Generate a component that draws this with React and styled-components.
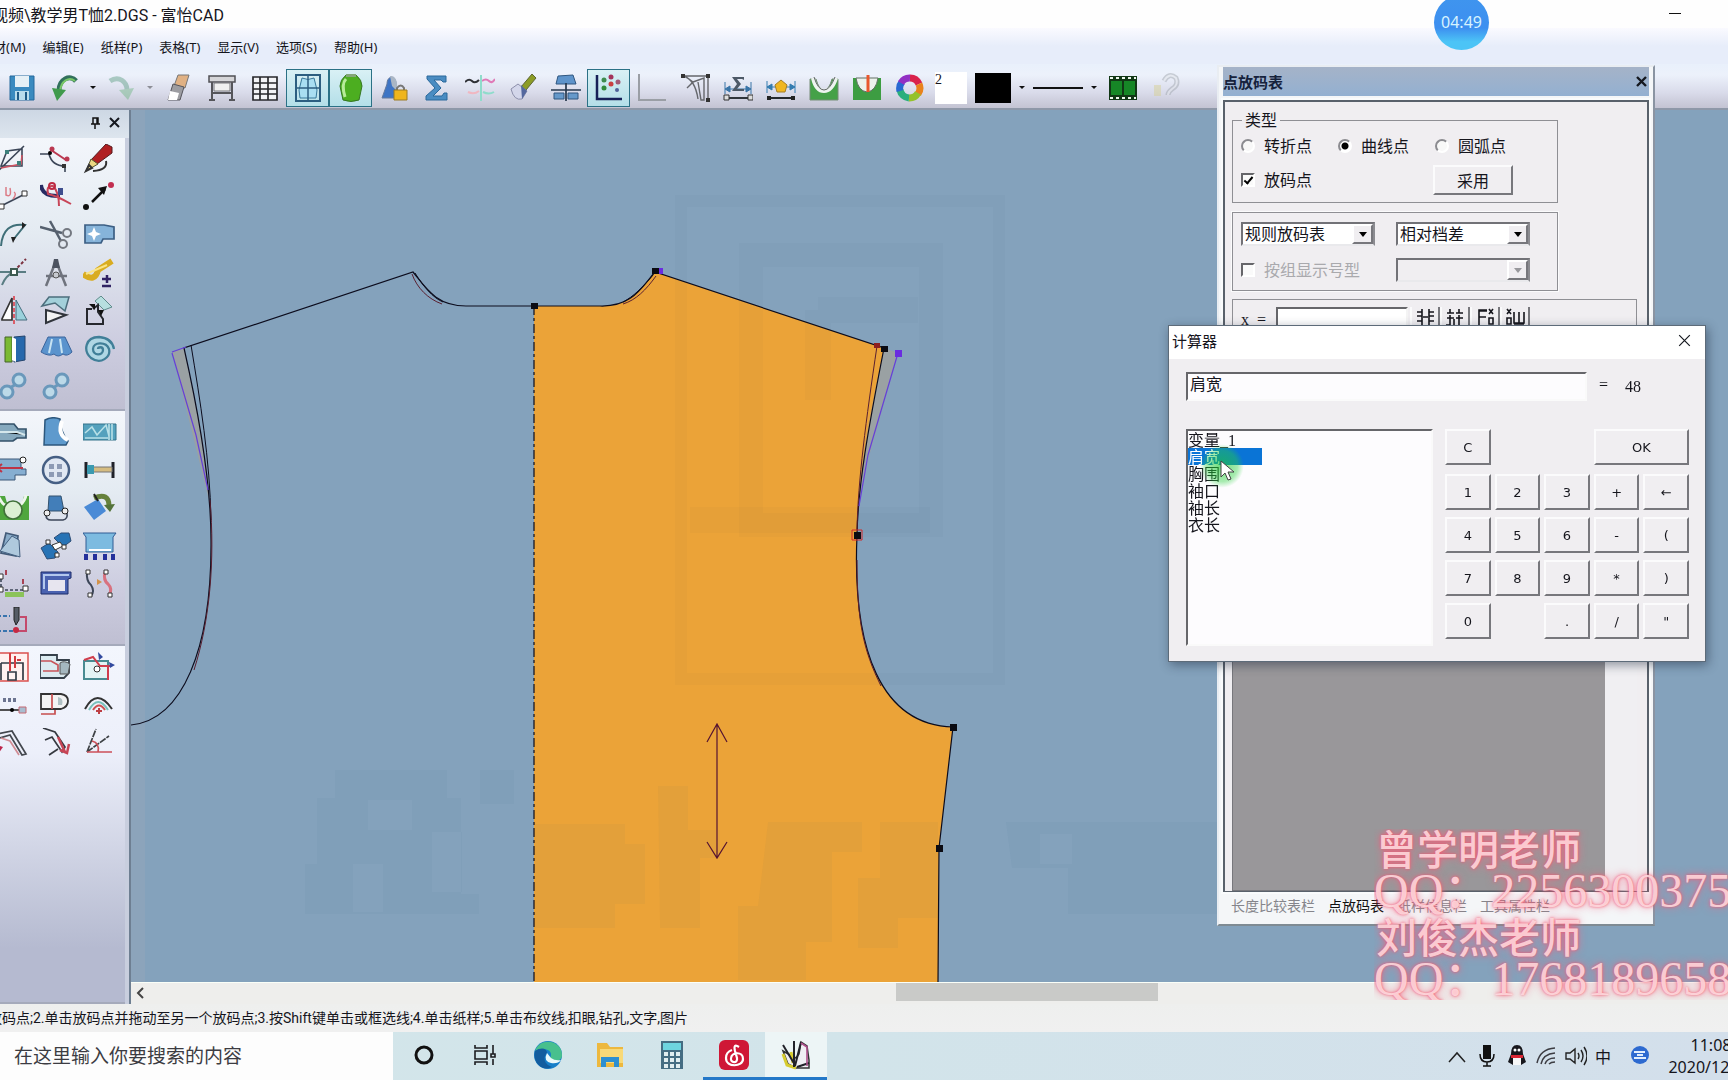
import styled, { createGlobalStyle } from "styled-components";
import { useState } from "react";

const GlobalStyle = createGlobalStyle`
  *,
  *::before,
  *::after {
    box-sizing: border-box;
  }

  body {
    margin: 0;
    overflow: hidden;
    font-family: "Noto Sans", "Noto Sans CJK SC", sans-serif;
    color: #15151c;
  }

  button,
  input,
  select {
    font-family: inherit;
    color: inherit;
    margin: 0;
  }
`;

const Desktop = styled.div`
  position: relative;
  display: flex;
  flex-direction: column;
  height: 100vh;
  overflow: hidden;
  background: #eeefee;
`;

const TitleBar = styled.header`
  display: flex;
  align-items: center;
  justify-content: space-between;
  height: 28px;
  flex: none;
  background: #fefefe;
  white-space: nowrap;
`;

const Title = styled.span`
  margin-left: -8px;
  font-family: Roboto, "Noto Sans CJK SC", sans-serif;
  font-size: 16px;
`;

const Minimize = styled.button`
  width: 12px;
  height: 14px;
  margin-right: 47px;
  padding: 0;
  border: 0;
  border-bottom: 1px solid #111;
  background: none;
  align-self: flex-start;
`;

const MenuBar = styled.nav`
  display: flex;
  align-items: center;
  gap: 17px;
  height: 36px;
  flex: none;
  padding-left: 1px;
  margin-left: -8px;
  background: linear-gradient(#fafaff, #e7edfa 50%);
`;

const MenuItem = styled.button`
  padding: 0;
  border: 0;
  background: none;
  font-size: 13px;
  white-space: nowrap;
`;

const Toolbar = styled.div`
  display: flex;
  align-items: center;
  height: 46px;
  flex: none;
  padding-top: 3px;
  border-bottom: 2px solid #8e98a8;
  background: linear-gradient(#e9f0fb, #ecf1fb 25%, #d9dbea 65%, #c3c3d2);
`;

const ToolButton = styled.button`
  display: flex;
  align-items: center;
  justify-content: center;
  width: 43px;
  height: 38px;
  flex: none;
  padding: 0;
  border: 1px solid ${(p) => (p.$active ? "#2b7186" : "transparent")};
  background: ${(p) => (p.$active ? "linear-gradient(#d9f1f5, #b4dfe8)" : "none")};
  opacity: ${(p) => (p.$faded ? 0.45 : 1)};
`;

const Caret = styled.button`
  width: 14px;
  flex: none;
  padding: 0;
  border: 0;
  background: none;
  opacity: ${(p) => (p.$faded ? 0.4 : 1)};

  &::after {
    content: "";
    display: block;
    margin: 0 auto;
    width: 6px;
    border: 3px solid transparent;
    border-top-color: #111;
    border-bottom: 0;
  }
`;

const SizeBox = styled.label`
  width: 32px;
  height: 32px;
  margin-left: 4px;
  background: #fff;

  input {
    width: 100%;
    padding: 0;
    border: 0;
    background: none;
    font: 14px "Liberation Serif", serif;
    vertical-align: top;
  }
`;

const ColorSwatch = styled.button`
  width: 36px;
  height: 30px;
  margin: 0 4px 0 8px;
  border: 0;
  background: #000;
`;

const LineStyle = styled.button`
  width: 50px;
  height: 2px;
  margin: 0 4px 0 4px;
  padding: 0;
  border: 0;
  background: #111;
`;

const Workspace = styled.main`
  display: flex;
  flex: 1;
  min-height: 0;
`;

const ToolPanel = styled.aside`
  display: flex;
  flex-direction: column;
  width: 131px;
  flex: none;
  overflow: hidden;
  border-right: 2px solid #6e7f92;
  background: #c8cede;
`;

const PanelHead = styled.div`
  display: flex;
  justify-content: flex-end;
  align-items: center;
  gap: 8px;
  height: 28px;
  padding: 0 9px 3px;
  background: linear-gradient(#cdd7e4, #dde5ee);
`;

const IconButton = styled.button`
  display: flex;
  padding: 0;
  border: 0;
  background: none;
`;

const ToolGroup = styled.div`
  display: grid;
  grid-template-columns: repeat(3, 43px);
  grid-auto-rows: 38px;
  align-content: start;
  justify-items: center;
  align-items: center;
  flex: ${(p) => (p.$grow ? 1 : "none")};
  margin-right: 4px;
  padding: 2px 0 3px;
  border-bottom: 2px solid #a5aabb;
  background: ${(p) =>
    p.$grow
      ? "linear-gradient(#f3f6fd, #eceffa 30%, #b5bad0 85%)"
      : "linear-gradient(#f3f6fb, #e4ebf2 35%, #cdcde0 75%, #bfbfd2)"};

  > * {
    margin-left: -16px;
  }
`;

const CanvasColumn = styled.section`
  display: flex;
  flex-direction: column;
  flex: 1;
  min-width: 0;
`;

const Canvas = styled.svg`
  display: block;
  width: 100%;
  flex: 1;
  min-height: 0;
  background: #84a2bc;
`;

const Scrollbar = styled.div`
  display: grid;
  grid-template-columns: 47.9% 16.4% 1fr;
  height: 22px;
  flex: none;
  border-top: 1px solid #fafff8;
  background: #eeeeec;
`;

const ScrollThumb = styled.div`
  height: 18px;
  background: #c9cac8;
`;

const StatusBar = styled.footer`
  height: 28px;
  flex: none;
  margin-left: -12px;
  background: linear-gradient(#eeefee, #f0f0f0);
  font-family: Roboto, "Noto Sans CJK SC", sans-serif;
  font-size: 14px;
  line-height: 29px;
  white-space: nowrap;
`;

const Taskbar = styled.div`
  display: flex;
  align-items: stretch;
  height: 48px;
  flex: none;
  background: linear-gradient(90deg, #d3e6ea, #d2e4ea 50%, #d3dfeb);
`;

const Search = styled.input`
  width: 393px;
  padding: 0 14px;
  border: 0;
  background: #fdfdfd;
  font-size: 19px;

  &::placeholder {
    color: #3c3c42;
    opacity: 1;
  }
`;

const TaskButton = styled.button`
  display: flex;
  align-items: center;
  justify-content: center;
  width: 62px;
  padding: 0;
  border: 0;
  border-bottom: 3px solid ${(p) => (p.$open ? "#2478c8" : "transparent")};
  background: ${(p) => (p.$active ? "#edf5f6" : "none")};
`;

const Tray = styled.div`
  display: flex;
  align-items: center;
  gap: 8px;
  margin-left: auto;
  white-space: nowrap;
`;

const Clock = styled.div`
  width: 67px;
  font-size: 16px;
  line-height: 22px;

  div {
    width: 100px;
    text-align: center;
  }
`;

const GradingPanel = styled.section`
  position: absolute;
  top: 65px;
  right: 73px;
  bottom: 154px;
  width: 438px;
  display: flex;
  flex-direction: column;
  padding: 0 4px 2px;
  border: 2px solid #e9edf2;
  border-right-color: #8a94a2;
  border-bottom-color: #7f8b93;
  background: #f4f6f8;
  font-size: 16px;
`;

const GradingTitle = styled.div`
  display: flex;
  align-items: center;
  justify-content: space-between;
  height: 29px;
  flex: none;
  padding: 0 2px 0 0;
  background: linear-gradient(#a5b3c8, #93b0d1);
  font-size: 15px;
  line-height: 20px;
  font-weight: 600;
  color: #16223c;
`;

const GradingBody = styled.div`
  display: flex;
  flex-direction: column;
  flex: 1;
  min-height: 0;
  margin-top: 4px;
  padding: 9px 10px 0 7px;
  border: 2px solid #59616b;
  border-bottom-width: 1px;
  outline: 2px solid #f9fbfc;
  background: #f0eef1;
`;

const Group = styled.fieldset`
  width: 326px;
  flex: none;
  min-width: 0;
  margin: ${(p) => (p.$plain ? "9px 0 0" : 0)};
  padding: ${(p) => (p.$plain ? "9px 8px 8px" : "0 8px 7px")};
  border: 1px solid #8f8f94;
  outline: ${(p) => (p.$plain ? "1px solid #fbfbfc" : 0)};

  legend {
    margin-left: 1px;
    padding: 0 3px;
    line-height: 18px;
  }
`;

const Row = styled.div`
  display: flex;
  align-items: center;
  gap: ${(p) => p.$gap || 0}px;
  margin-top: ${(p) => p.$top || 0}px;
`;

const Choice = styled.label`
  display: flex;
  align-items: center;
  gap: 9px;
  width: ${(p) => p.$width || 97}px;
  line-height: 24px;
  white-space: nowrap;
  color: ${(p) => (p.$disabled ? "#a9a9ad" : "inherit")};
`;

const Radio = styled.input.attrs({ type: "radio" })`
  appearance: none;
  width: 14px;
  height: 14px;
  flex: none;
  border: 2px solid;
  border-color: #8b8b90 #fff #fff #8b8b90;
  border-radius: 50%;
  background: ${(p) => (p.checked ? "radial-gradient(#000 3px, #fff 4px)" : "#f8f8f8")};
`;

const Check = styled.input.attrs({ type: "checkbox" })`
  appearance: none;
  width: 14px;
  height: 14px;
  flex: none;
  border: 2px solid;
  border-color: #66666a #fff #fff #66666a;
  background: #fafafa;

  &:checked::after {
    content: "";
    display: block;
    width: 5px;
    height: 9px;
    margin: 0 auto;
    border: solid #000;
    border-width: 0 2px 2px 0;
    transform: rotate(40deg);
  }
`;

const RaisedButton = styled.button`
  width: ${(p) => (p.$width ? p.$width + "px" : "auto")};
  height: ${(p) => p.$height || 36}px;
  padding: 0;
  border: 2px solid;
  border-color: #fbfbfc #77777c #77777c #fbfbfc;
  background: #f0eef1;
  font-size: ${(p) => p.$size || 14}px;
`;

const Drop = styled.span`
  position: relative;
  display: block;
  width: 134px;
  height: 24px;
  border: 2px solid;
  border-color: #727277 #8b8b90 #e9e9ec #727277;
  background: ${(p) => (p.$disabled ? "#f0eef1" : "#fff")};

  select {
    appearance: none;
    display: block;
    width: 100%;
    height: 20px;
    padding: 0 0 0 2px;
    border: 0;
    border-radius: 0;
    background: none;
    font-size: 16px;
    line-height: 20px;
  }

  &::before {
    content: "";
    position: absolute;
    top: 0;
    right: 0;
    width: 21px;
    height: 20px;
    border: 2px solid;
    border-color: #fff #77777c #77777c #fff;
    background: #f0eef1;
    pointer-events: none;
  }

  &::after {
    content: "";
    position: absolute;
    top: 8px;
    right: 6px;
    border: 4px solid transparent;
    border-top: 5px solid ${(p) => (p.$disabled ? "#98989c" : "#000")};
    border-bottom: 0;
    pointer-events: none;
  }
`;

const Offsets = styled.div`
  display: flex;
  align-items: center;
  flex: none;
  height: 34px;
  margin-top: 8px;
  padding: 6px 8px 0;
  border: 1px solid #8f8f94;
  border-bottom: 0;
  font-family: "Liberation Serif", serif;

  input {
    width: 132px;
    height: 26px;
    margin: 0 2px 0 10px;
    border: 2px solid;
    border-color: #66666a #f4f4f4 #f4f4f4 #66666a;
    background: #fff;
  }

  button {
    border-top: 0;
  }
`;

const GradeList = styled.div`
  flex: 1;
  border: 1px solid #77777c;
  border-right: 32px solid #f0eff2;
  background: #99979a;
`;

const TabRow = styled.div`
  display: flex;
  gap: 13px;
  height: 30px;
  flex: none;
  align-items: center;
  padding: 0 0 2px 8px;
`;

const Tab = styled.button`
  padding: 0;
  border: 0;
  background: none;
  font-size: 14px;
  line-height: 20px;
  white-space: nowrap;
  color: ${(p) => (p.$active ? "#111" : "#85858b")};
`;

const Dialog = styled.section`
  position: absolute;
  top: 325px;
  right: 22px;
  width: 538px;
  border: 1px solid #5d6b79;
  background: #f0eef1;
  box-shadow: 2px 3px 10px rgba(20, 30, 50, 0.45);
`;

const DialogTitle = styled.div`
  display: flex;
  align-items: center;
  justify-content: space-between;
  height: 33px;
  padding: 0 14px 4px 3px;
  background: #fff;
  font-size: 15px;
`;

const DialogBody = styled.div`
  padding: 13px 16px 15px 17px;
`;

const Expression = styled.div`
  display: flex;
  align-items: center;
  font-family: "Liberation Serif", "Noto Sans CJK SC", serif;
  font-size: 16px;

  input {
    width: 401px;
    height: 29px;
    padding: 0 2px 8px;
    border: 2px solid;
    border-color: #66666a #fafafa #fafafa #66666a;
    background: #fdfcfe;
    font-size: 16px;
    outline: none;
  }

  span {
    margin-left: 12px;
    padding-bottom: 4px;
  }

  output {
    margin-left: 17px;
  }
`;

const Keys = styled.div`
  display: flex;
  gap: 12px;
  margin-top: 28px;
`;

const VariableList = styled.select`
  width: 247px;
  height: 217px;
  padding: 0;
  border: 2px solid;
  border-color: #66666a #fafafa #fafafa #66666a;
  border-radius: 0;
  background: #fdfcfe;
  font-family: "Liberation Serif", "Noto Sans CJK SC", serif;
  font-size: 16px;
  overflow: hidden;
  outline: none;

  option {
    display: flex;
    align-items: center;
    width: 74px;
    height: 17px;
    min-height: 0;
    padding: 0 0 2px;
    white-space: pre;
    overflow: visible;
  }

  option:checked {
    background: linear-gradient(#0a74d6, #0a74d6);
    color: #fff;
  }
`;

const Keypad = styled.div`
  display: grid;
  grid-template-columns: repeat(5, 1fr);
  grid-template-rows: 38px;
  grid-auto-rows: 36px;
  gap: 7px 4px;
  flex: 1;
`;

const Key = styled(RaisedButton)`
  grid-column: ${(p) => p.$column || "auto"};
  height: 36px;
  font-family: "DejaVu Sans", sans-serif;
  font-size: 13px;
`;

const Pointer = styled.div`
  position: absolute;
  top: 444px;
  right: 484px;
  width: 44px;
  height: 44px;
  border-radius: 50%;
  background: radial-gradient(rgba(30, 200, 50, 0.65), rgba(40, 210, 60, 0.4) 50%, transparent 70%);
  pointer-events: none;

  svg {
    display: block;
    margin: 16px 0 0 20px;
  }
`;

const Timer = styled.div`
  position: absolute;
  top: -5px;
  right: 239px;
  width: 55px;
  height: 55px;
  border-radius: 50%;
  background: linear-gradient(#3f95ee, #3d8ff0 60%, #4cc4f6 85%);
  color: #d6f3ff;
  font-size: 16px;
  line-height: 54px;
  text-align: center;
`;

const Watermark = styled.div`
  position: absolute;
  right: 0;
  bottom: 80px;
  width: 354px;
  height: 171px;
  overflow: hidden;
  color: rgba(255, 222, 226, 0.85);
  text-shadow: 0 0 3px #f0596f, 0 0 8px rgba(245, 100, 130, 0.9);
  white-space: nowrap;
  pointer-events: none;

  p {
    margin: 0;
    padding-left: 2px;
    font: 500 41px/36px "Noto Sans CJK SC", sans-serif;
  }

  p:nth-child(even) {
    padding-left: 0;
    font: 48px/52px "Liberation Serif", "Noto Sans CJK SC", serif;
  }
`;

const line = { fill: "none", stroke: "#3c4658", strokeWidth: 1.6 };

const icons = {
  save: (
    <>
      <path d="M3 3h24v24H3z" fill="#3a8abf" stroke="#24689c" />
      <path d="M8 3h14v11H8z" fill="#e6f0f6" />
      <path d="M8 18h14v9H8z" fill="#b9dcec" />
      <path d="M11 19v8M19 19v8" stroke="#1e5a86" strokeWidth="2" />
    </>
  ),
  undo: (
    <>
      <path d="M26 8C20 1 9 6 9 18" fill="none" stroke="#31705b" strokeWidth="5" />
      <path d="M25 8C19 3 11 8 10 18" fill="none" stroke="#79c767" strokeWidth="2" />
      <path d="M2 15l14 2-9 11z" fill="#409a4c" />
    </>
  ),
  redo: (
    <>
      <path d="M3 8c9-6 17 1 17 9" fill="none" stroke="#5c9d82" strokeWidth="5" />
      <path d="M12 17l15-2-6 12z" fill="#6fb583" />
    </>
  ),
  eraser: (
    <>
      <path d="M14 2l11 0-4 13-11-2z" fill="#e0b184" stroke="#777" />
      <path d="M9 11l11 3-4 13H4z" fill="#9d9da2" stroke="#55555c" />
      <path d="M6 18l9 2-2 7H4z" fill="#fff" />
    </>
  ),
  plotter: (
    <>
      <path d="M2 3h26v6H2z" fill="#d5d5d8" stroke="#505055" strokeWidth="1.5" />
      <path d="M5 9v17M25 9v17M2 27h6M22 27h6M5 20h20" fill="none" stroke="#55555a" strokeWidth="2" />
      <path d="M7 10h16v8H7z" fill="#f0f0f0" stroke="#77777a" />
    </>
  ),
  grid: (
    <path
      d="M3 4h24v23H3zM3 10h24M3 16h24M3 21h24M10 4v23M18 4v23"
      fill="#f3f3f6"
      stroke="#28282c"
      strokeWidth="1.7"
    />
  ),
  piece: (
    <>
      <path d="M3 2h24v26H3z" fill="none" stroke="#2c5e80" strokeWidth="2" />
      <path d="M9 5q6 3 12 0l3 12-1 8H7l-1-8z" fill="#a9def2" stroke="#37789a" />
      <path d="M15 2v26M3 15h24" stroke="#2c5e80" strokeWidth="1.5" />
    </>
  ),
  jar: (
    <>
      <path d="M10 2h10q6 5 6 11l-3 14q-8 3-16 0L4 13q0-6 6-11z" fill="#4cae20" stroke="#367722" />
      <path d="M10 6q-5 5-1 18" fill="none" stroke="#b8eb9a" strokeWidth="3" />
      <path d="M10 1h10v3H10z" fill="#83a778" />
    </>
  ),
  lock: (
    <>
      <path d="M8 11c0-9 9-9 9 0l1 14H3z" fill="#3e74c4" stroke="#64799c" />
      <path d="M11 3q6-1 7 8l1 8-6-6z" fill="#aab6c5" />
      <path d="M18 18v-3q4-5 7 0v3" fill="none" stroke="#777" strokeWidth="2" />
      <path d="M15 17h13v10H15z" fill="#efb51d" stroke="#9b7a24" />
    </>
  ),
  sigma: <path d="M5 3h19v6h-3l-2-2h-7l7 8-8 8h9l2-3h3v7H4v-4l9-8-8-9z" fill="#4a8cc2" stroke="#2a689b" />,
  curves: (
    <>
      <path d="M0 9q4-4 7-1t7-1" fill="none" stroke="#2f3136" strokeWidth="2" />
      <path d="M17 8q4-3 7 0t6-2" fill="none" stroke="#e07ab7" strokeWidth="2" />
      <path d="M3 19q6 3 11-1" fill="none" stroke="#f0b7c1" strokeWidth="2" />
      <path d="M16 2v26M18 19q6 3 11 0" fill="none" stroke="#8fdccb" strokeWidth="2" />
    </>
  ),
  brush: (
    <>
      <path d="M24 1l4 4-10 12-5-3z" fill="#8c9c26" stroke="#5c6634" />
      <path d="M3 16l7-5 9 7-5 8q-8 2-11-10z" fill="#d3d6ea" stroke="#8c8fab" />
      <path d="M13 12l6 6-5 8z" fill="#54689e" />
    </>
  ),
  sleeve: (
    <>
      <path d="M7 3l15-1 3 9H5z" fill="#5e94cb" stroke="#305780" />
      <path d="M0 17h30M15 10v18" stroke="#26384d" strokeWidth="1.7" />
      <path d="M3 20h10v6H3zM17 20h10v6H17z" fill="#6699ca" stroke="#305780" />
    </>
  ),
  scatter: (
    <>
      <path d="M3 2v24h25" fill="none" stroke="#172058" strokeWidth="2.5" />
      <circle cx="10" cy="7" r="2.5" fill="#3e8c4e" /><circle cx="17" cy="4" r="2.5" fill="#a3345b" />
      <circle cx="10" cy="15" r="2.5" fill="#318b3b" /><circle cx="17" cy="11" r="2.5" fill="#c94040" />
      <circle cx="24" cy="9" r="2.5" fill="#a25a75" /><circle cx="23" cy="17" r="2" fill="#51639a" />
    </>
  ),
  axes: <path d="M2 1v26h27" fill="none" stroke="#9a9ea5" strokeWidth="2" />,
  corner: (
    <>
      <path d="M3 3h25v24M3 3q12 3 15 23M5 3l8 6-6 6M13 9l11-4v22h-3L18 9" fill="none" stroke="#65676c" strokeWidth="1.4" />
      <path d="M1 1h4v4H1zM26 1h4v4h-4zM26 25h4v4h-4z" fill="#333" />
    </>
  ),
  measure: (
    <>
      <path d="M2 9v12M28 9v12M2 16l5-3v6zM28 16l-5-3v6zM7 16h16" fill="#3974a7" stroke="#3974a7" />
      <path d="M9 4h12v3l-2-1h-5l4 5-4 5h7v2H9l5-7z" fill="#4d5967" />
      <path d="M4 25h23" stroke="#30343a" strokeWidth="2" />
      <path d="M1 22h5v5H1zM25 22h5v5h-5z" fill="#ddd" stroke="#333" />
    </>
  ),
  star: (
    <>
      <path d="M1 8v12M29 8v12M1 14h28M1 14l5-3v6zM29 14l-5-3v6z" fill="#347cb0" stroke="#347cb0" />
      <path d="M15 7l6 5-2 7h-8l-2-7z" fill="#f0b620" stroke="#a57e24" />
      <path d="M3 25h24" stroke="#25292e" strokeWidth="2" />
      <path d="M1 23h4v4H1zM25 23h4v4h-4z" fill="#222" />
    </>
  ),
  notch: (
    <>
      <path d="M1 6h6q3 11 8 11t8-11h6v21H1z" fill="#45a148" stroke="#758d77" />
      <path d="M4 5q3 13 11 13T27 5" fill="none" stroke="#eef4f0" strokeWidth="4" />
      <path d="M5 4q4 13 10 13T26 4" fill="none" stroke="#5f6464" />
    </>
  ),
  notchRed: (
    <>
      <path d="M1 5h28v22H1z" fill="#3d9d42" />
      <path d="M4 5q2 13 11 14 9-1 11-14z" fill="#edf2ed" stroke="#627064" />
      <path d="M16 2v17" stroke="#e9572d" strokeWidth="3" />
    </>
  ),
  ring: (
    <g fill="none" strokeWidth="7">
      <path d="M15 5a10 10 0 0 1 9 6" stroke="#d9224b" />
      <path d="M24 11a10 10 0 0 1-1 10" stroke="#e9821c" />
      <path d="M23 20a10 10 0 0 1-9 5" stroke="#94c22b" />
      <path d="M14 25a10 10 0 0 1-9-8" stroke="#2baf7c" />
      <path d="M5 18a10 10 0 0 1 2-9" stroke="#2869d2" />
      <path d="M6 10a10 10 0 0 1 9-5" stroke="#9230c4" />
    </g>
  ),
  film: (
    <>
      <path d="M1 3h28v24H1z" fill="#123816" />
      <path d="M3 8h11v14H3zM16 8h11v14H16z" fill="#168726" />
      <path d="M2 5h26M2 25h26" stroke="#eef8ee" strokeWidth="2" strokeDasharray="3 3" />
    </>
  ),
  help: (
    <>
      <path d="M13 8q5-9 12-3 3 7-4 11-4 3-4 6" fill="none" stroke="#9ba1a8" strokeWidth="5" />
      <path d="M13 8q5-9 12-3 3 7-4 11-4 3-4 6" fill="none" stroke="#dfe2e6" strokeWidth="2" />
      <path d="M3 12h7v11H3z" fill="#d6cf8e" />
    </>
  ),
  pen1: (
    <>
      <path d="M2 26L27 2M4 22l6-15 15-2v17z" {...line} />
      <path d="M4 24l20-4 1-9" fill="none" stroke="#cf5362" strokeWidth="1.5" />
      <path d="M8 6h4v4H8zM20 17h4v4h-4z" fill="#3c807b" />
    </>
  ),
  curvePoint: (
    <>
      <path d="M0 10h9q3 12 16 12v6" {...line} />
      <path d="M11 6l15 10" stroke="#ba3850" strokeWidth="2" />
      <circle cx="10" cy="9" r="2" /><circle cx="12" cy="5" r="2.5" fill="#ba3850" />
      <circle cx="27" cy="15" r="2.5" fill="#ba3850" /><path d="M22 20h4v4h-4z" fill="#333" />
    </>
  ),
  pencil: (
    <>
      <path d="M23 0l6 3v6L14 20 8 16z" fill="#b01f22" stroke="#541d20" />
      <path d="M8 15l7 5L3 27z" fill="#ecd782" stroke="#553" />
      <path d="M3 27l3-6 3 3zM10 27q15-1 13-10" fill="none" stroke="#333" strokeWidth="2" />
    </>
  ),
  joint: (
    <>
      <path d="M4 24l24-12" {...line} />
      <path d="M9 5v8q6 3 4-7M16 17q4-5 1-7" fill="none" stroke="#dc7c87" strokeWidth="1.5" />
      <path d="M2 22h5v5H2zM25 9h5v5h-5z" fill="#fff" stroke="#333" />
    </>
  ),
  pinCurve: (
    <>
      <path d="M1 3q1 12 19 11" fill="none" stroke="#272b63" strokeWidth="4" />
      <path d="M31 22Q17 14 8 12q-2-9 5-8 6 6 6 20" fill="none" stroke="#c84558" strokeWidth="2" />
      <circle cx="12" cy="4" r="3" fill="none" stroke="#bd2a43" strokeWidth="2" /><path d="M18 6h5v7h-5z" fill="#3e4e8e" />
    </>
  ),
  arrowLine: (
    <>
      <path d="M9 20L22 7" stroke="#111" strokeWidth="2.5" />
      <path d="M15 6l9-2-3 9z" fill="#111" /><circle cx="3" cy="25" r="3" fill="#111" />
      <circle cx="28" cy="3" r="3" fill="#c22f50" />
    </>
  ),
  arc: (
    <>
      <path d="M4 26Q6 2 28 5L16 20" fill="none" stroke="#3f6f78" strokeWidth="2" />
      <path d="M25 2l4 3-4 4zM14 17h5l-3 6z" fill="#222" />
    </>
  ),
  scissors: (
    <>
      <path d="M0 7l22 6M10 1l11 20" stroke="#55606e" strokeWidth="2.5" />
      <circle cx="27" cy="13" r="4" fill="none" stroke="#737880" strokeWidth="2" />
      <circle cx="23" cy="24" r="4" fill="none" stroke="#737880" strokeWidth="2" />
    </>
  ),
  pieceStar: (
    <>
      <path d="M2 5h19l10 2v12H20l-2 4H2z" fill="#86b4da" stroke="#3c5f84" strokeWidth="1.7" />
      <path d="M11 7l2 5 5 2-5 2-2 5-2-5-5-2 5-2z" fill="#fff" />
    </>
  ),
  cross: (
    <>
      <path d="M2 14h27M5 27q4-10 12-13" fill="none" stroke="#5a7d83" strokeWidth="2" />
      <path d="M17 13L29 1" stroke="#7c3340" strokeWidth="2" strokeDasharray="3 2" />
      <path d="M14 11h6v6h-6z" fill="#fff" stroke="#3d5b50" strokeWidth="2" />
    </>
  ),
  compass: (
    <>
      <path d="M16 3L6 28M16 3l10 25M6 18h21" stroke="#6f737d" strokeWidth="2.5" />
      <path d="M14 1h4l2 9h-8z" fill="#4c5360" /><circle cx="16" cy="17" r="3" fill="#c7cad0" stroke="#555" />
    </>
  ),
  tape: (
    <>
      <path d="M0 16q12 9 15-4L29 3" fill="none" stroke="#d9ac20" strokeWidth="6" />
      <path d="M3 16l21-9" stroke="#fae484" strokeWidth="2" />
      <path d="M19 21h9M24 17v8M19 28h9" stroke="#302363" strokeWidth="2.5" />
    </>
  ),
  mirror: (
    <>
      <path d="M5 24V23L15 2v22z" fill="#fff" stroke="#333" strokeWidth="1.7" />
      <path d="M19 4l11 20H19z" fill="#9ad1dc" stroke="#466d7e" />
      <path d="M17 0v28" stroke="#da5d69" strokeWidth="2" strokeDasharray="4 2" />
    </>
  ),
  fold: (
    <>
      <path d="M2 10L9 1h20l-4 14-10-8z" fill="#a3d0da" stroke="#4c6d7c" strokeWidth="1.5" />
      <path d="M6 14v13l20-8z" fill="#f2f2f2" stroke="#30343b" strokeWidth="2" />
    </>
  ),
  rotate: (
    <>
      <path d="M12 5l6-5 11 11-8 3z" fill="#b7dfdf" stroke="#5f8b8b" />
      <path d="M9 13H4v15h16v-5l-5-7V9l-5 4" fill="none" stroke="#26282e" strokeWidth="2" />
      <path d="M15 14h6l-3 6zM6 8h6v6z" fill="#111" />
    </>
  ),
  panels: (
    <>
      <path d="M8 3h7v25H8z" fill="#7bb934" stroke="#456528" />
      <path d="M17 3l11-1v24l-11 2z" fill="#2768ac" stroke="#25456e" />
      <path d="M15 3l4 2v23l-4-2z" fill="#fff" />
    </>
  ),
  skirt: (
    <>
      <path d="M8 3h17l7 15q-5 5-9 2-5 4-9 0-5 3-13-2z" fill="#5a93cd" stroke="#3a649c" />
      <path d="M12 5l-3 14M20 5l2 14" stroke="#c7e3f2" strokeWidth="2" />
    </>
  ),
  spiral: (
    <path
      d="M31 15q-2-11-15-12C2 3 0 17 8 24c10 7 20-1 18-9C23 7 10 8 10 15c0 7 10 7 10 1 0-4-5-3-5-1"
      fill="#afd7e4"
      stroke="#417f98"
      strokeWidth="2.3"
    />
  ),
  links: (
    <g fill="#bcd9e8" stroke="#6a98bb" strokeWidth="3">
      <circle cx="22" cy="8" r="6" /><circle cx="10" cy="20" r="6" />
      <path d="M13 16l6-4" />
    </g>
  ),
  pieceSide: (
    <>
      <path d="M0 7h17l4 5h8v9h-9l-4 3H0z" fill="#86a9be" stroke="#34526a" strokeWidth="1.7" />
      <path d="M0 15h20l8 3" stroke="#d4e7ec" strokeWidth="2" />
    </>
  ),
  seam: (
    <>
      <path d="M5 3q7-4 15-1 1 14 8 22l-2 4H4z" fill="#5e9acd" stroke="#2c577d" strokeWidth="1.5" />
      <path d="M22 4q-5 14 6 19" fill="none" stroke="#fff" strokeWidth="4" />
    </>
  ),
  texture: (
    <>
      <path d="M0 7h33v16H0z" fill="#54a1bd" stroke="#35728a" />
      <path d="M2 16l7-6 5 8 9-10 3 11M2 21h23M26 7v16M29 7v16" fill="none" stroke="#b8e0e7" strokeWidth="1.6" />
    </>
  ),
  redArrow: (
    <>
      <path d="M0 4h24v10h5v6h-11v5H0z" fill="#86aed1" stroke="#3d5879" />
      <path d="M0 13h26M5 9l-5 4 5 4" fill="none" stroke="#be3447" strokeWidth="2" />
      <circle cx="26" cy="5" r="3" fill="#fff" stroke="#222" />
    </>
  ),
  button: (
    <>
      <circle cx="16" cy="15" r="13" fill="#e0e8f3" stroke="#455f84" strokeWidth="2.5" />
      <path d="M9 9h5v5H9zM17 9h5v5h-5zM9 17h5v5H9zM17 17h5v5h-5z" fill="#8d9bb5" />
    </>
  ),
  bar: (
    <>
      <path d="M3 7v16M30 7v16" stroke="#202229" strokeWidth="3" />
      <path d="M5 12h24v5H5z" fill="#d5bc81" stroke="#777" /><path d="M4 10h7v9H4z" fill="#3b9ab0" />
    </>
  ),
  green: (
    <>
      <path d="M0 3h8q3 14 10 13 6 0 9-13h5v24H0z" fill="#4fa63e" />
      <path d="M1 3q5 9 7 9h15q5-4 6-10" fill="none" stroke="#eff6ed" strokeWidth="3" />
      <circle cx="16" cy="17" r="9" fill="#dcf0d3" stroke="#41713a" strokeWidth="1.7" />
    </>
  ),
  cuff: (
    <>
      <path d="M9 3h12l3 15H8z" fill="#427eb9" stroke="#34536f" />
      <path d="M6 22q0 5 5 5h12q5-1 4-7" {...line} />
      <circle cx="7" cy="20" r="3" fill="#eee" stroke="#222" /><circle cx="25" cy="18" r="3" fill="#eee" stroke="#222" />
    </>
  ),
  turn: (
    <>
      <path d="M1 14l14-8 8 12-12 9z" fill="#4a8ad6" /><path d="M11 5q15-6 15 8" fill="none" stroke="#66813c" strokeWidth="5" />
      <path d="M21 12l11-1-5 8z" fill="#54733a" /><path d="M11 1l4 7" stroke="#222" strokeWidth="2" />
    </>
  ),
  sheets: (
    <>
      <path d="M9 2l12 3-2 20-15-3z" fill="#8aacc9" stroke="#435b78" strokeWidth="1.7" />
      <path d="M15 5l7 4 1 17-20-6z" fill="#afc9dd" stroke="#446080" />
    </>
  ),
  blobs: (
    <>
      <path d="M1 17l8-5 9 9-3 6-8 1zM14 7l7-5h8l2 8-8 6z" fill="#2773b5" stroke="#2e4d76" />
      <path d="M12 14l8-3 3 4-8 4z" fill="#fff" stroke="#333" /><path d="M6 9h4v4H6zM22 14h4v4h-4zM15 22h4v4h-4z" fill="#fff" stroke="#333" />
    </>
  ),
  drape: (
    <>
      <path d="M0 2h33l-3 4v15H3V6z" fill="#7dbbe0" stroke="#315c94" />
      <path d="M6 19h22" stroke="#fff" fill="none" strokeWidth="2" />
      <path d="M3 23v6M12 23v6M22 23v6M30 23v6" stroke="#24309a" strokeWidth="4" />
    </>
  ),
  stitch: (
    <>
      <path d="M8 23h19v5H8z" fill="#8bc35a" /><path d="M4 5v16h25" {...line} strokeDasharray="3 2" />
      <path d="M1 5h5v5H1zM1 18h5v5H1zM26 17h5v5h-5z" fill="#fff" stroke="#333" /><path d="M9 1v5M26 10v5" stroke="#a74354" strokeWidth="2" />
    </>
  ),
  frame: (
    <>
      <path d="M1 3h30v6l-3 1v15H1z" fill="#4a62b0" stroke="#1c2c6b" />
      <path d="M8 11h17v11H8z" fill="#e7e5ef" /><path d="M3 6h26M4 6v14" fill="none" stroke="#b3c8ed" strokeWidth="2" />
    </>
  ),
  sCurve: (
    <>
      <path d="M4 3q-1 9 4 13 4 6 0 11" {...line} strokeWidth="2" />
      <path d="M22 3q-2 8 3 12 5 5 1 11" fill="none" stroke="#d8717f" strokeWidth="3" />
      <path d="M3 1h4v4H3zM5 24h4v4H5zM21 1h4v4h-4zM25 24h4v4h-4z" fill="#fff" stroke="#333" /><path d="M14 10l5 3-5 3z" fill="#d39249" />
    </>
  ),
  needle: (
    <>
      <path d="M0 9h13M0 24h17" stroke="#3874ae" strokeWidth="2" strokeDasharray="4 2" />
      <path d="M17 0v13l2 5 3-5V0z" fill="#555c65" stroke="#222" /><path d="M23 10h6v14h-9" fill="none" stroke="#c44a6c" strokeWidth="2" />
      <circle cx="19" cy="23" r="3" fill="#c52943" />
    </>
  ),
  house: (
    <>
      <path d="M0 1h31v28H0z" fill="#fff1f0" stroke="#da504e" strokeWidth="1.5" />
      <path d="M4 11h22v17M4 11v17M11 20h8v8h-8z" fill="none" stroke="#343b45" strokeWidth="1.7" />
      <path d="M13 1v18M18 4v12M20 8h4" stroke="#d23a3f" strokeWidth="2" />
    </>
  ),
  bag: (
    <>
      <path d="M0 3h17v5h12v13l-5 5H0z" fill="#dcebf1" stroke="#36404a" strokeWidth="1.8" />
      <path d="M1 9h10l7 4v6H3" fill="none" stroke="#c8555a" strokeWidth="1.7" /><path d="M20 11q4-3 10 1l-2 10h-8z" fill="#a5b7bf" stroke="#555" />
    </>
  ),
  cutBox: (
    <>
      <path d="M1 9h24v18H1z" fill="#e4f4f5" stroke="#488b91" strokeWidth="2" />
      <path d="M1 8l9-3 7 9h12M25 14v14" fill="none" stroke="#d03e4d" strokeWidth="2" /><path d="M15 0l5 5-4 3zM26 10l6 3-5 3z" fill="#324a9f" />
      <circle cx="14" cy="17" r="3" fill="#fff" stroke="#333" />
    </>
  ),
  dots: (
    <>
      <path d="M6 8h3v4H6zM11 8h3v4h-3zM16 8h3v4h-3z" fill="#6c7490" /><path d="M0 20h29" stroke="#333" strokeWidth="1.7" />
      <circle cx="15" cy="20" r="2" /><path d="M22 17h7v6h-7z" fill="#a8bdd0" stroke="#c56973" />
    </>
  ),
  layers: (
    <>
      <path d="M1 4h20q7 1 7 7t-7 8H1z" fill="#f3f3f3" stroke="#333" strokeWidth="1.8" />
      <path d="M12 4v15M1 24h14v-4" fill="none" stroke="#c64e4f" strokeWidth="1.7" /><path d="M18 7q6 1 4 8h-4V7z" fill="#b1c1c4" />
    </>
  ),
  rainbow: (
    <g fill="none" strokeWidth="2">
      <path d="M2 19q12-22 27 0" stroke="#333" /><path d="M6 20q9-16 19 0" stroke="#7bc1bc" />
      <path d="M10 20q6-9 12 0" stroke="#cc5151" /><path d="M13 21h6M16 18v6" stroke="#bd3e44" />
    </g>
  ),
  angleL: (
    <>
      <path d="M0 6l15-3 14 23-4 1L13 7 3 10" fill="none" stroke="#43474e" strokeWidth="1.7" />
      <path d="M4 10l9 3 9 14" fill="none" stroke="#d18c94" strokeWidth="1.7" /><path d="M0 17l6 2-5 7z" fill="#bd244b" />
    </>
  ),
  legs: (
    <>
      <path d="M3 0l12 4 10 15-3 5L12 9 5 12M9 27l9-6" fill="none" stroke="#353940" strokeWidth="1.7" />
      <path d="M18 9l7 15M29 16l-2 9-7-3" fill="none" stroke="#c64455" strokeWidth="2.5" />
    </>
  ),
  protractor: (
    <>
      <path d="M4 24L26 8M4 24L13 1" stroke="#3d4145" strokeWidth="1.7" strokeDasharray="7 1" />
      <path d="M4 24h25M9 13q8 2 6 11" fill="none" stroke="#cc5059" strokeWidth="1.6" />
    </>
  ),
};

const toolGroups = [
  [
    "pen1", "curvePoint", "pencil",
    "joint", "pinCurve", "arrowLine",
    "arc", "scissors", "pieceStar",
    "cross", "compass", "tape",
    "mirror", "fold", "rotate",
    "panels", "skirt", "spiral",
    "links", "links",
  ],
  [
    "pieceSide", "seam", "texture",
    "redArrow", "button", "bar",
    "green", "cuff", "turn",
    "sheets", "blobs", "drape",
    "stitch", "frame", "sCurve",
    "needle",
  ],
  ["house", "bag", "cutBox", "dots", "layers", "rainbow", "angleL", "legs", "protractor"],
];

const Icon = ({ name, width = 30 }) => (
  <svg width={width} height="30" viewBox={`0 0 ${width} 30`} aria-hidden="true">
    {icons[name]}
  </svg>
);

const Tool = ({ name, ...rest }) => (
  <ToolButton aria-label={name} {...rest}>
    <Icon name={name} />
  </ToolButton>
);

const Cross = ({ size = 11, weight = 2 }) => (
  <svg width={size} height={size} viewBox="0 0 11 11">
    <path d="M1 1l9 9M10 1l-9 9" stroke="#15181f" strokeWidth={weight} />
  </svg>
);

const ghostBlocks = [
  "M335 770h112v28h14v96h18v20H305v-50h12v-66h18zM368 800v30h44v-30zM353 864v48h30v-48zM432 832v60h30v-60z",
  "M480 770h34v34h-34z",
  "M535 824h90v20h20v60h-30v24h-80z",
  "M658 786h30v44h32v28h-20v70h-40z",
  "M768 822h94v30h-30v90h-26v38h-68v-74h20z",
  "M880 822h58v96h-40v30h-40v-70h22z",
  "M1006 822h212v92h-150v-46h-56zM1040 834v30h32v-30z",
];

const PatternCanvas = () => (
  <Canvas viewBox="131 110 1597 872" preserveAspectRatio="xMinYMin slice" role="img" aria-label="T恤纸样">
    <path d="M131 110h14v872h-14z" fill="#93a6b9" fillOpacity="0.5" />
    <path
      d="M534 306H600C632 307 641 288 655 272L884 348C868 430 858 485 857 535C852 650 881 725 953 727L939 848 938 983H534z"
      fill="#eba338"
    />
    <g fill="none" stroke="#16324b" strokeOpacity="0.022">
      <path d="M681 201h318v478H681z" strokeWidth="12" />
      <path d="M751 255h180v270H751z" strokeWidth="24" />
      <path d="M818 310h100M818 310v90M690 520h240" strokeWidth="26" />
    </g>
    <g fill="#16506b" fillOpacity="0.035" fillRule="evenodd">
      {ghostBlocks.map((d) => (
        <path key={d} d={d} />
      ))}
    </g>
    <path d="M884 348L898 353L868 460L858 510C862 440 876 390 884 348M172 352L184 348C194 400 206 440 209 500z" fill="#b0a08a" fillOpacity="0.5" />
    <g fill="none" stroke="#0c0c1d" strokeWidth="1.2">
      <path d="M534 306H466C436 306 426 288 413 272L184 348C198 410 211 480 211 540C212 650 182 720 131 725" />
      <path d="M534 306H600C632 307 641 288 655 272L884 348C868 430 858 485 857 535C852 650 881 725 953 727L939 848 938 983" />
      <path d="M534 306V983" strokeDasharray="9 3 3 3" />
      <path d="M415 273c8 13 18 25 28 29M191 345C200 400 210 460 211 520M653 275c-10 12-20 22-30 27" strokeWidth="1" />
    </g>
    <g fill="none" stroke="#5a2030" strokeWidth="1">
      <path d="M877 346C866 420 858 480 857 530M412 274c5 14 16 25 30 30M656 276c-10 14-20 24-33 28M210 500c5 60 0 120-16 170M857 560c0 60 6 90 24 126" />
    </g>
    <g fill="none" stroke="#6540d8" strokeWidth="1.2">
      <path d="M898 353L868 455 859 506M172 353L196 435 208 490M172 352L186 347" />
    </g>
    <path d="M717 724v134M707 742l10-18 10 18M707 842l10 16 10-16" fill="none" stroke="#551331" strokeWidth="1.2" />
    <g fill="#0b0b12">
      <path d="M531 303h7v6h-7zM652 268h8v6h-8zM881 346h7v6h-7zM854 532h7v7h-7zM950 724h7v7h-7zM936 845h7v7h-7z" />
    </g>
    <path d="M659 268h4v6h-4zM895 350h7v7h-7z" fill="#6a2ce0" />
    <path d="M874 343h6v5h-6z" fill="#8d2020" />
    <path d="M852 530h10v10h-10z" fill="none" stroke="#d02a2a" />
  </Canvas>
);

const GradingTable = () => {
  const [kind, setKind] = useState("曲线点");
  const [grading, setGrading] = useState(true);

  return (
    <GradingPanel>
      <GradingTitle>
        点放码表
        <IconButton aria-label="关闭">
          <Cross weight={2.4} />
        </IconButton>
      </GradingTitle>
      <GradingBody>
        <Group>
          <legend>类型</legend>
          <Row $top={5}>
            {["转折点", "曲线点", "圆弧点"].map((k) => (
              <Choice key={k}>
                <Radio name="kind" checked={kind === k} onChange={() => setKind(k)} />
                {k}
              </Choice>
            ))}
          </Row>
          <Row $top={7}>
            <Choice $width={192}>
              <Check checked={grading} onChange={() => setGrading(!grading)} />
              放码点
            </Choice>
            <RaisedButton $width={80} $height={30} $size={16}>
              采用
            </RaisedButton>
          </Row>
        </Group>
        <Group $plain>
          <Row $gap={21}>
            <Drop>
              <select aria-label="放码表">
                <option>规则放码表</option>
              </select>
            </Drop>
            <Drop>
              <select aria-label="档差">
                <option>相对档差</option>
              </select>
            </Drop>
          </Row>
          <Row $gap={21} $top={12}>
            <Choice $width={134} $disabled>
              <Check disabled />
              按组显示号型
            </Choice>
            <Drop $disabled>
              <select aria-label="号型" disabled />
            </Drop>
          </Row>
        </Group>
        <Offsets>
          <label htmlFor="dx">x&nbsp;&nbsp;=</label>
          <input id="dx" />
          {[
            "M2 5h5M2 9h5M2 14h5M7 2v16M8 10h5M14 2v16M14 5h5M14 9h5M14 14h5",
            "M2 6h7M5 2v4M11 6h7M14 2v4M2 11h7M11 11h7M5 8v10M9 12v6M14 8v10M1 18h4",
            "M4 18V3h8M4 4h8M4 10h7M14 2l4 5M18 2l-4 5M14 11h4v6h-4z",
            "M2 2l4 5M6 2l-4 5M2 11h4v6H2zM9 5v11h10V5M14 5v11M9 17h10",
          ].map((d) => (
            <RaisedButton key={d} $width={30} $height={26} aria-label="放码">
              <svg width="20" height="20" viewBox="0 0 20 20">
                <path d={d} fill="none" stroke="#16161c" strokeWidth="1.6" />
              </svg>
            </RaisedButton>
          ))}
        </Offsets>
        <GradeList />
      </GradingBody>
      <TabRow>
        <Tab>长度比较表栏</Tab>
        <Tab $active>点放码表</Tab>
        <Tab>纸样信息栏</Tab>
        <Tab>工具属性栏</Tab>
      </TabRow>
    </GradingPanel>
  );
};

const keys = ["1", "2", "3", "+", "←", "4", "5", "6", "-", "(", "7", "8", "9", "*", ")", "0"];

const Calculator = () => {
  const [expression, setExpression] = useState("肩宽");

  return (
    <Dialog role="dialog" aria-label="计算器">
      <DialogTitle>
        计算器
        <IconButton aria-label="关闭">
          <Cross size={13} weight={1} />
        </IconButton>
      </DialogTitle>
      <DialogBody>
        <Expression>
          <input aria-label="公式" autoFocus value={expression} onChange={(e) => setExpression(e.target.value)} />
          <span>=</span>
          <output>48</output>
        </Expression>
        <Keys>
          <VariableList size={12} aria-label="变量" value={expression} onChange={(e) => setExpression(e.target.value)}>
            <option value="变量_1">变量_1</option>
            {["肩宽", "胸围", "袖口", "袖长", "衣长"].map((v) => (
              <option key={v} value={v}>
                {v}
              </option>
            ))}
          </VariableList>
          <Keypad>
            <Key>C</Key>
            <Key $column="4 / 6">OK</Key>
            {keys.map((k) => (
              <Key key={k}>{k}</Key>
            ))}
            <Key $column="3">.</Key>
            <Key>/</Key>
            <Key>"</Key>
          </Keypad>
        </Keys>
      </DialogBody>
    </Dialog>
  );
};

const taskIcons = {
  Cortana: <circle cx="15" cy="15" r="8" fill="none" stroke="#111" strokeWidth="3" />,
  任务视图: (
    <path d="M4 5v3h12V5M4 25v-3h12v3M4 11h12v8H4zM22 5v9M22 19v6M20 14h4v3h-4z" fill="none" stroke="#1c1c20" strokeWidth="1.6" />
  ),
  Edge: (
    <>
      <circle cx="15" cy="15" r="14" fill="#177fc9" />
      <path d="M2 11C6-3 29-1 29 15c0 7-10 8-12 3 5-9-9-11-15-7z" fill="#48c08d" />
      <path d="M2 11c6-4 12-3 12 2-5 5-2 12 5 14-9 5-20-4-17-16z" fill="#135d9f" />
      <path d="M14 13q-4 8 4 10 7 1 10-3-6 1-10-2z" fill="#eaf8fa" />
    </>
  ),
  资源管理器: (
    <>
      <path d="M2 3h10l3 4h13v20H2z" fill="#edb83e" />
      <path d="M5 9h23v14H5z" fill="#f8d977" />
      <path d="M6 27V17h18v10h-5v-5h-8v5z" fill="#2d8fd0" />
    </>
  ),
  计算器: (
    <>
      <path d="M4 1h22v28H4z" fill="#456d83" />
      <path d="M6 3h18v7H6z" fill="#6ed4df" />
      <path d="M9 12v16M15 12v16M21 12v16" stroke="#e0edf0" strokeWidth="4" strokeDasharray="4 2" />
    </>
  ),
  网易云音乐: (
    <>
      <rect width="30" height="30" rx="6" fill="#cf1736" />
      <path d="M20 7q-6-4-4 4l2 7c1 6-7 5-6 0 1-6 12-7 12 1 0 8-17 9-17-1 0-5 3-7 6-8" fill="none" stroke="#fff" strokeWidth="2.2" />
    </>
  ),
  富怡CAD: (
    <>
      <path d="M2 11l5 13 8 4h13V20l-2-14-6-4-2 12-3 4-4-2z" fill="#f0eff4" stroke="#333" strokeWidth="1.5" />
      <path d="M2 14l4 11 9 3M10 12l2 11" fill="none" stroke="#d7cc30" strokeWidth="3" />
      <path d="M13 1v26M20 2l-6 24M2 5l12 20M16 27l12-4" fill="none" stroke="#22222a" strokeWidth="2" />
      <path d="M20 3l6 4v19" fill="none" stroke="#ad4f8b" strokeWidth="1.6" />
    </>
  ),
};

const trayIcons = [
  <path d="M4 17l8-9 8 9" fill="none" stroke="#222" strokeWidth="1.5" />,
  <>
    <path d="M8 0h8v14H8z" fill="#111" />
    <path d="M5 9q0 8 7 8t7-8M12 17v4M8 21h8" fill="none" stroke="#111" strokeWidth="1.5" />
  </>,
  <>
    <path d="M6 9q0-9 6-9t6 9l3 8-5 3H8l-5-3z" fill="#17171c" />
    <path d="M8 13h8v7H8z" fill="#f7f7f7" />
    <path d="M6 10h12v3H6z" fill="#db2634" /><circle cx="10" cy="5" r="1.5" fill="#fff" /><circle cx="14" cy="5" r="1.5" fill="#fff" />
  </>,
  <path d="M2 18Q5 4 20 3M6 19Q8 9 20 8M10 19q2-6 10-6M14 19q2-2 6-2" fill="none" stroke="#3c3c42" strokeWidth="1.5" />,
  <path d="M1 8h4l5-4v14l-5-4H1zM13 8q2 3 0 6M16 5q4 6 0 12M19 2q6 9 0 18" fill="none" stroke="#222" strokeWidth="1.4" />,
];

const App = () => (
  <Desktop>
    <GlobalStyle />
    <TitleBar>
      <Title>视频\教学男T恤2.DGS - 富怡CAD</Title>
      <Minimize aria-label="最小化" />
    </TitleBar>
    <MenuBar>
      {["材(M)", "编辑(E)", "纸样(P)", "表格(T)", "显示(V)", "选项(S)", "帮助(H)"].map((m) => (
        <MenuItem key={m}>{m}</MenuItem>
      ))}
    </MenuBar>
    <Toolbar>
      <Tool name="save" />
      <Tool name="undo" />
      <Caret aria-label="撤销列表" />
      <Tool name="redo" $faded />
      <Caret aria-label="重做列表" $faded />
      {["eraser", "plotter", "grid"].map((n) => (
        <Tool key={n} name={n} />
      ))}
      <Tool name="piece" $active />
      <Tool name="jar" $active />
      {["lock", "sigma", "curves", "brush", "sleeve"].map((n) => (
        <Tool key={n} name={n} />
      ))}
      <Tool name="scatter" $active />
      {["axes", "corner", "measure", "star", "notch", "notchRed", "ring"].map((n) => (
        <Tool key={n} name={n} />
      ))}
      <SizeBox>
        <input aria-label="线宽" defaultValue="2" />
      </SizeBox>
      <ColorSwatch aria-label="颜色" />
      <Caret aria-label="颜色列表" />
      <LineStyle aria-label="线型" />
      <Caret aria-label="线型列表" />
      <Tool name="film" />
      <Tool name="help" $faded />
    </Toolbar>
    <Workspace>
      <ToolPanel>
        <PanelHead>
          <IconButton aria-label="固定">
            <svg width="12" height="12" viewBox="0 0 12 12">
              <path d="M4 1h5v6H4zM2 7h9M6 7v5M8 1v6" fill="none" stroke="#111" strokeWidth="1.5" />
            </svg>
          </IconButton>
          <IconButton aria-label="关闭">
            <Cross />
          </IconButton>
        </PanelHead>
        {toolGroups.map((group, i) => (
          <ToolGroup key={i} $grow={i === 2}>
            {group.map((name, j) => (
              <IconButton key={j} aria-label={name}>
                <Icon name={name} width={34} />
              </IconButton>
            ))}
          </ToolGroup>
        ))}
      </ToolPanel>
      <CanvasColumn>
        <PatternCanvas />
        <Scrollbar>
          <IconButton aria-label="向左滚动">
            <svg width="18" height="22" viewBox="0 0 18 22">
              <path d="M12 5l-5 5 5 5" fill="none" stroke="#444" strokeWidth="2" />
            </svg>
          </IconButton>
          <ScrollThumb />
        </Scrollbar>
      </CanvasColumn>
    </Workspace>
    <StatusBar>
      放码点;2.单击放码点并拖动至另一个放码点;3.按Shift键单击或框选线;4.单击纸样;5.单击布纹线,扣眼,钻孔,文字,图片
    </StatusBar>
    <Taskbar>
      <Search aria-label="搜索" placeholder="在这里输入你要搜索的内容" />
      {Object.entries(taskIcons).map(([name, shape]) => (
        <TaskButton key={name} aria-label={name} $open={name === "网易云音乐" || name === "富怡CAD"} $active={name === "富怡CAD"}>
          <svg width="30" height="30" viewBox="0 0 30 30">
            {shape}
          </svg>
        </TaskButton>
      ))}
      <Tray>
        {trayIcons.map((shape, i) => (
          <svg key={i} width="22" height="22" viewBox="0 0 22 22">
            {shape}
          </svg>
        ))}
        <span>中</span>
        <svg width="34" height="22" viewBox="0 0 34 22">
          <circle cx="21" cy="10" r="9" fill="#2d6ad0" />
          <path d="M15 7h11M15 13h12M18 10h6" stroke="#e2eefc" strokeWidth="2" />
        </svg>
        <Clock>
          <div>11:08</div>
          <div>2020/12/12</div>
        </Clock>
      </Tray>
    </Taskbar>
    <GradingTable />
    <Calculator />
    <Pointer>
      <svg width="16" height="22" viewBox="0 0 16 22">
        <path d="M1 1v16l4-4 3 7 3-1-3-7h6z" fill="#fff" stroke="#444" />
      </svg>
    </Pointer>
    <Timer>04:49</Timer>
    <Watermark>
      <p>曾学明老师</p>
      <p>QQ：2256300375</p>
      <p>刘俊杰老师</p>
      <p>QQ：1768189658</p>
    </Watermark>
  </Desktop>
);

export default App;
